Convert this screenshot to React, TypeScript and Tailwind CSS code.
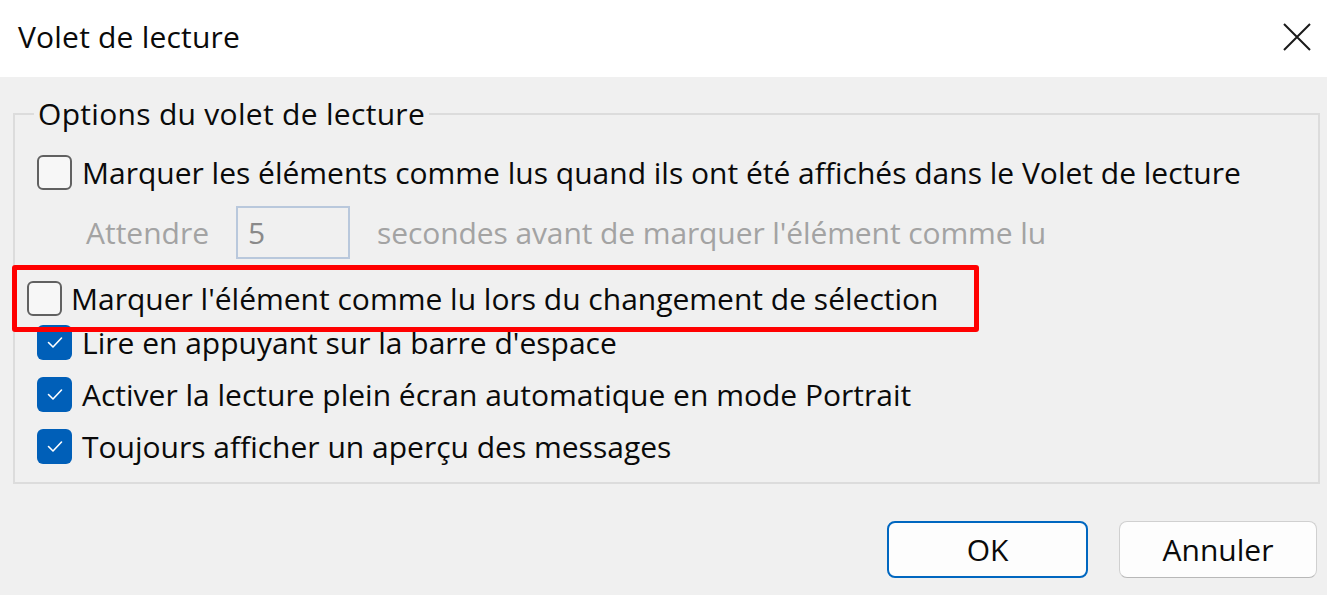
import React from "react";

function Box({ checked }: { checked: boolean }) {
  if (checked) {
    return (
      <span className="flex h-[35px] w-[35px] shrink-0 items-center justify-center rounded-[6px] bg-[#005fb8]">
        <svg width="20" height="20" viewBox="0 0 20 20" fill="none">
          <path d="M3.5 10.5l4.5 4.5 8.5-9" stroke="#ffffff" strokeWidth="1.6" strokeLinecap="round" strokeLinejoin="round" />
        </svg>
      </span>
    );
  }
  return <span className="h-[35px] w-[35px] shrink-0 rounded-[6px] border-2 border-[#616161] bg-[#f7f7f7]" />;
}

function CheckRow({ label, checked }: { label: string; checked: boolean }) {
  return (
    <div className="flex h-[52px] items-center gap-[10px] pl-[22px]">
      <Box checked={checked} />
      <span>{label}</span>
    </div>
  );
}

export default function App() {
  return (
    <div className="h-[595px] w-[1327px] overflow-hidden bg-[#f0f0f0] font-['Open_Sans',sans-serif] text-[30px] text-[#0a0a0a]">
      <div className="flex h-[77px] items-center justify-between bg-white pb-[4px] pl-[18px] pr-[16px]">
        <span className="tracking-[0.2px]">Volet de lecture</span>
        <svg width="28" height="28" viewBox="0 0 28 28" fill="none">
          <path d="M1 1l26 26M27 1L1 27" stroke="#1a1a1a" strokeWidth="2" />
        </svg>
      </div>

      <div className="pl-[13px] pr-[7px] pt-[17px]">
        <fieldset className="border-2 border-[#dcdcdc] pb-[10px]">
          <legend className="ml-[19px] px-[4px] leading-[40px] tracking-[0.3px]">Options du volet de lecture</legend>
          <div className="pt-[12px]">
            <div className="flex h-[53px] items-center gap-[10px] pl-[22px]">
              <Box checked={false} />
              <span>Marquer les éléments comme lus quand ils ont été affichés dans le Volet de lecture</span>
            </div>
            <div className="flex h-[66px] items-center pl-[71px] text-[#a3a3a3]">
              <span>Attendre</span>
              <span className="ml-[27px] flex h-[53px] w-[114px] items-center border-2 border-[#b9c8dc] pl-[10px] text-[#8a8a8a]">5</span>
              <span className="ml-[27px] tracking-[-0.1px]">secondes avant de marquer l'élément comme lu</span>
            </div>
            <div className="relative z-10 ml-[-3px] flex h-[67px] w-[967px] items-center gap-[9px] rounded-[3px] border-[5px] border-[#ff0000] pl-[10px]">
              <Box checked={false} />
              <span>Marquer l'élément comme lu lors du changement de sélection</span>
            </div>
            <div className="mt-[-16px]">
              <CheckRow label="Lire en appuyant sur la barre d'espace" checked />
            </div>
            <CheckRow label="Activer la lecture plein écran automatique en mode Portrait" checked />
            <CheckRow label="Toujours afficher un aperçu des messages" checked />
          </div>
        </fieldset>
      </div>

      <div className="flex justify-end gap-[31px] pr-[10px] pt-[37px]">
        <button className="h-[57px] w-[201px] rounded-[8px] border-2 border-[#0067c0] bg-[#fdfdfd]">OK</button>
        <button className="h-[57px] w-[198px] rounded-[8px] border border-[#d0d0d0] border-b-[#b8b8b8] bg-[#fdfdfd]">Annuler</button>
      </div>
    </div>
  );
}
